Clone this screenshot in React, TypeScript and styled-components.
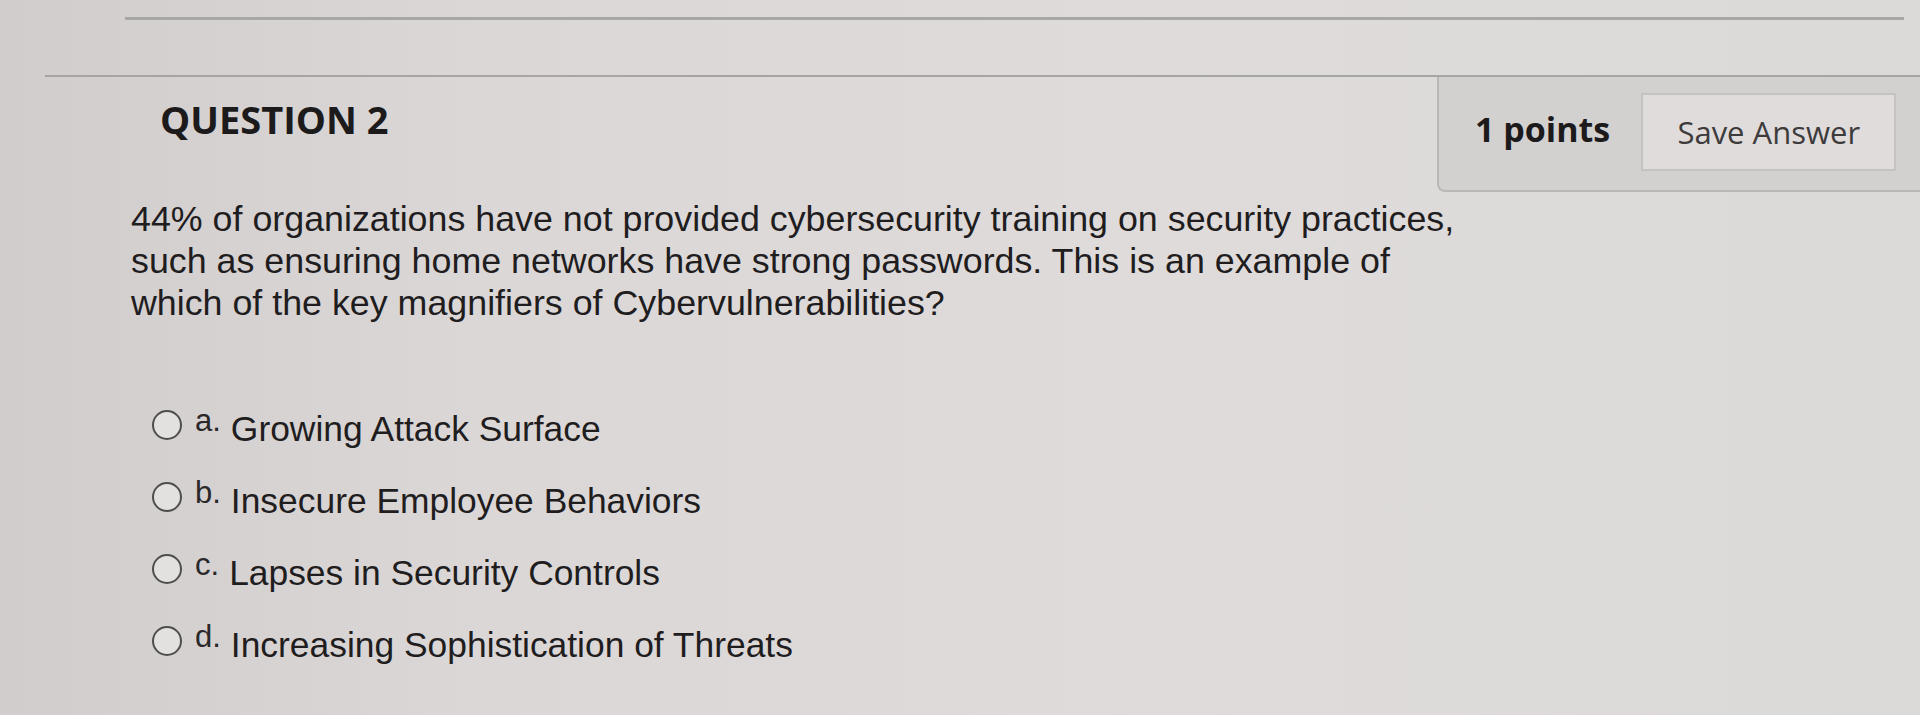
import styled, { createGlobalStyle } from "styled-components";

const GlobalStyle = createGlobalStyle`
  html, body {
    margin: 0;
    padding: 0;
  }
  body {
    width: 1920px;
    height: 715px;
    overflow: hidden;
    background: linear-gradient(to right, #d1cdcd 0%, #dbd7d7 25%, #dfdbdb 60%, #dcd9d9 100%);
    color: #1f1d1e;
  }
`;

const Page = styled.div`
  padding-top: 17px;
`;

const TopRule = styled.div`
  height: 3px;
  margin: 0 16px 0 125px;
  background: #a9a6a6;
`;

const Section = styled.section`
  margin: 55px 0 0 45px;
  border-top: 2px solid #a7a4a4;
`;

const Header = styled.header`
  display: flex;
  justify-content: space-between;
  align-items: flex-start;
`;

const Title = styled.h2`
  margin: 0;
  padding: 20px 0 0 115px;
  font-family: "Open Sans", "Noto Sans", sans-serif;
  font-size: 38px;
  font-weight: 700;
  line-height: 1.2;
  color: #1c1a1b;
`;

const PointsBox = styled.div`
  display: flex;
  align-items: center;
  gap: 31px;
  width: 445px;
  height: 113px;
  padding-left: 36px;
  background: #d3d0d0;
  border-left: 2px solid #bab7b7;
  border-bottom: 2px solid #bab7b7;
  border-bottom-left-radius: 8px;
`;

const Points = styled.span`
  margin-top: -10px;
  font-family: "Open Sans", "Noto Sans", sans-serif;
  font-size: 34px;
  font-weight: 700;
  color: #1c1a1b;
`;

const SaveButton = styled.button`
  width: 255px;
  height: 78px;
  margin-top: -4px;
  background: #dfdcdb;
  border: 2px solid #c5c2c2;
  border-radius: 0;
  font-family: "Open Sans", "Noto Sans", sans-serif;
  font-size: 31px;
  color: #3d3b3c;
  cursor: pointer;
`;

const QuestionText = styled.p`
  margin: 6px 0 0 86px;
  max-width: 1345px;
  font-family: "Liberation Sans", Arial, sans-serif;
  font-size: 35.8px;
  line-height: 42px;
  color: #1f1d1e;
`;

const Options = styled.div`
  display: flex;
  flex-direction: column;
  margin: 65px 0 0 107px;
`;

const Option = styled.label`
  display: flex;
  align-items: center;
  height: 72px;
  font-family: "Liberation Sans", Arial, sans-serif;
  color: #1f1d1e;
  cursor: pointer;
`;

const Radio = styled.span`
  width: 26px;
  height: 26px;
  border: 2px solid #4f4d4e;
  border-radius: 50%;
  background: #e3e0e0;
  flex-shrink: 0;
`;

const Letter = styled.span`
  margin: -8px 10px 0 13px;
  font-size: 31px;
  color: #2a2829;
`;

const OptionText = styled.span`
  font-size: 35.4px;
  margin-top: 8px;
`;

const options = [
  { letter: "a.", text: "Growing Attack Surface" },
  { letter: "b.", text: "Insecure Employee Behaviors" },
  { letter: "c.", text: "Lapses in Security Controls" },
  { letter: "d.", text: "Increasing Sophistication of Threats" },
];

export default function App() {
  return (
    <>
      <GlobalStyle />
      <Page>
        <TopRule />
        <Section>
          <Header>
            <Title>QUESTION 2</Title>
            <PointsBox>
              <Points>1 points</Points>
              <SaveButton>Save Answer</SaveButton>
            </PointsBox>
          </Header>
          <QuestionText>
            44% of organizations have not provided cybersecurity training on
            security practices, such as ensuring home networks have strong
            passwords. This is an example of which of the key magnifiers of
            Cybervulnerabilities?
          </QuestionText>
          <Options>
            {options.map((o) => (
              <Option key={o.letter}>
                <Radio />
                <Letter>{o.letter}</Letter>
                <OptionText>{o.text}</OptionText>
              </Option>
            ))}
          </Options>
        </Section>
      </Page>
    </>
  );
}
